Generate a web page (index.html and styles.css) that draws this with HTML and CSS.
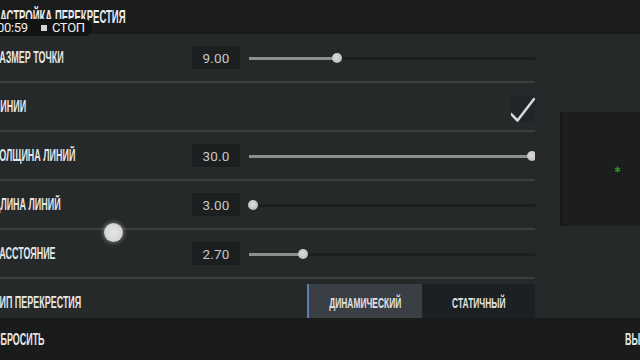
FILE: index.html
```html
<!DOCTYPE html>
<html lang="ru">
<head>
<meta charset="utf-8">
<title>Настройка перекрестия</title>
<link rel="stylesheet" href="styles.css">
</head>
<body>
<div class="screen">
  <header class="topbar">
    <span class="cond title">НАСТРОЙКА ПЕРЕКРЕСТИЯ</span>
  </header>
  <div class="timer">
    <span class="time">00:59</span>
    <span class="stop-sq"></span>
    <span>СТОП</span>
  </div>
  <main class="content">
    <section class="settings">
      <div class="row">
        <div class="label"><span class="cond">РАЗМЕР ТОЧКИ</span></div>
        <div class="value">9.00</div>
        <div class="slider" style="--p:0.30"><div class="fill"></div><div class="thumb"></div></div>
      </div>
      <div class="row">
        <div class="label"><span class="cond">ЛИНИИ</span></div>
        <div class="checkbox">
          <svg width="24" height="27" viewBox="0 0 24 27"><path d="M0 19 L6.5 25.5 L23 4" fill="none" stroke="#d6d8d8" stroke-width="2.6" stroke-linecap="round" stroke-linejoin="round"/></svg>
        </div>
      </div>
      <div class="row">
        <div class="label"><span class="cond">ТОЛЩИНА ЛИНИЙ</span></div>
        <div class="value">30.0</div>
        <div class="slider" style="--p:1"><div class="fill"></div><div class="thumb"></div></div>
      </div>
      <div class="row">
        <div class="label"><span class="cond">ДЛИНА ЛИНИЙ</span></div>
        <div class="value">3.00</div>
        <div class="slider" style="--p:0"><div class="fill"></div><div class="thumb"></div></div>
      </div>
      <div class="row">
        <div class="label"><span class="cond">РАССТОЯНИЕ</span></div>
        <div class="value">2.70</div>
        <div class="slider" style="--p:0.18"><div class="fill"></div><div class="thumb"></div></div>
      </div>
      <div class="row last">
        <div class="label"><span class="cond">ТИП ПЕРЕКРЕСТИЯ</span></div>
        <div class="segmented">
          <div class="seg active"><span class="cond seg-text">ДИНАМИЧЕСКИЙ</span></div>
          <div class="seg"><span class="cond seg-text">СТАТИЧНЫЙ</span></div>
        </div>
      </div>
    </section>
    <aside class="preview-col">
      <div class="preview">
        <svg class="star" width="7" height="7" viewBox="0 0 7 7"><path d="M3.5 0.5V6.5M0.8 2L6.2 5M0.8 5L6.2 2" stroke="#2f9a2f" stroke-width="1.3"/></svg>
      </div>
    </aside>
  </main>
  <footer class="bottombar">
    <span class="cond foot">СБРОСИТЬ</span>
    <span class="exit"><span class="cond foot">ВЫЙТИ</span></span>
  </footer>
  <div class="touch"></div>
</div>
</body>
</html>
```
FILE: styles.css
```css
* { box-sizing: border-box; }
html, body { margin: 0; padding: 0; background: #25292a; }
.screen {
  position: relative;
  width: 640px;
  height: 360px;
  overflow: hidden;
  background: #25292a;
  font-family: "Liberation Sans", Arial, sans-serif;
  color: #e4e4e4;
  display: flex;
  flex-direction: column;
}
.cond {
  display: inline-block;
  white-space: nowrap;
  font-weight: 700;
  transform: scaleX(0.56);
  transform-origin: left center;
}
.topbar {
  height: 34px;
  flex: 0 0 34px;
  background: #1b1c1c;
  display: flex;
  align-items: center;
}
.title {
  font-size: 18px;
  transform: scaleX(0.53);
  margin-left: -7px;
  color: #ececec;
  margin-top: 1px;
}
.timer {
  position: absolute;
  left: 0;
  top: 19px;
  height: 17px;
  padding: 0 7px 0 0;
  background: #121313;
  border-radius: 0 8px 8px 0;
  display: flex;
  align-items: center;
  font-family: "Roboto", "Liberation Sans", sans-serif;
  font-size: 13px;
  letter-spacing: -0.3px;
  color: #f0f0f0;
}
.time { margin-left: -3px; }
.stop-sq {
  width: 6px;
  height: 6px;
  background: #d4d4d4;
  margin: 0 5px 0 13px;
}
.content {
  height: 284px;
  flex: 0 0 284px;
  display: flex;
}
.settings {
  width: 535px;
  flex: 0 0 535px;
  overflow: hidden;
}
.row {
  height: 49px;
  border-bottom: 2px solid #3c3f40;
  display: flex;
  align-items: center;
}
.row.last { border-bottom: none; height: 47px; }
.label {
  flex: 0 0 198px;
  font-size: 16px;
  color: #e6e6e6;
  margin-left: -6px;
}
.value {
  flex: 0 0 48px;
  height: 23px;
  background: #1c1f20;
  display: flex;
  align-items: center;
  justify-content: center;
  font-family: "Roboto", "Liberation Sans", sans-serif;
  font-size: 13.5px;
  color: #c6c8c8;
  letter-spacing: 0.2px;
}
.slider {
  position: relative;
  flex: 1;
  margin-left: 9px;
  height: 12px;
}
.slider::before {
  content: "";
  position: absolute;
  left: 0;
  right: 0;
  top: 5px;
  height: 3px;
  background: #1c1f1f;
}
.fill {
  position: absolute;
  left: 0;
  top: 5px;
  height: 3px;
  width: calc(4px + (100% - 7px) * var(--p));
  background: #8c8e8f;
}
.thumb {
  position: absolute;
  top: 1px;
  left: calc(4px + (100% - 7px) * var(--p) - 5px);
  width: 10px;
  height: 10px;
  border-radius: 50%;
  background: radial-gradient(circle at 45% 40%, #dcdcdc 0%, #c4c4c4 60%, #a9a9a9 100%);
}
.checkbox {
  margin-left: auto;
  width: 24px;
  height: 27px;
  background: #212527;
  margin-top: 3px;
}
.checkbox svg { display: block; }
.segmented {
  margin-left: auto;
  align-self: flex-start;
  margin-top: 5px;
  display: flex;
  height: 36px;
}
.seg {
  width: 113px;
  background: #1d2022;
  display: flex;
  align-items: center;
  justify-content: center;
}
.seg.active {
  width: 115px;
  background: #3a3f46;
  border-left: 2px solid #5d7fae;
}
.seg-text {
  font-size: 15px;
  color: #e2e2e2;
  transform-origin: center center;
}
.preview-col {
  flex: 1;
  padding: 78px 0 0 25px;
}
.preview {
  width: 80px;
  height: 114px;
  background: #1b1e1c;
  border-left: 2px solid #151716;
  display: flex;
  align-items: center;
  justify-content: center;
  padding-left: 32px;
}
.star { display: block; }
.bottombar {
  flex: 1;
  background: #1a1b1b;
  display: flex;
  align-items: center;
  padding-top: 1px;
}
.foot {
  font-size: 16px;
  color: #e8e8e8;
  margin-left: -6px;
}
.exit {
  margin-left: auto;
  width: 15px;
  flex: 0 0 15px;
}
.exit .foot { margin-left: 0; }
.touch {
  position: absolute;
  left: 104px;
  top: 223px;
  width: 19px;
  height: 19px;
  border-radius: 50%;
  background: radial-gradient(circle at 50% 50%, #e6e6e6 0%, #d8d8d8 55%, #bdbdbd 100%);
  box-shadow: 0 0 4px 1px rgba(255, 255, 255, 0.35);
}
```
